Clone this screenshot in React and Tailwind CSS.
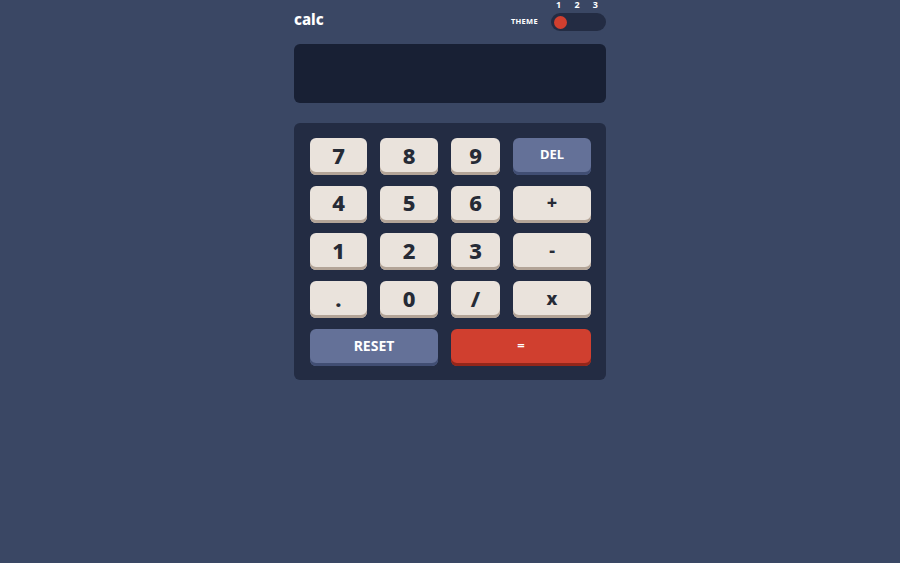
const keys = [
  { label: '7' }, { label: '8' }, { label: '9' }, { label: 'DEL', kind: 'blue' },
  { label: '4' }, { label: '5' }, { label: '6' }, { label: '+', kind: 'op' },
  { label: '1' }, { label: '2' }, { label: '3' }, { label: '-', kind: 'op' },
  { label: '.' }, { label: '0' }, { label: '/' }, { label: 'x', kind: 'op' },
];

function Key({ label, kind }) {
  if (kind === 'blue') {
    return (
      <button className="h-[37px] pb-[3px] rounded-[6px] bg-[#647198] shadow-[inset_0_-3px_0_#414e73] text-white text-[13px] font-bold">
        {label}
      </button>
    );
  }
  return (
    <button
      className={
        'h-[37px] pb-[3px] rounded-[6px] bg-[#eae3dc] shadow-[inset_0_-3px_0_#b3a497] text-[#262b36] font-extrabold ' +
        (kind === 'op' ? 'text-[18px]' : 'text-[22px]')
      }
    >
      {label}
    </button>
  );
}

export default function App() {
  return (
    <div className="min-h-screen bg-[#3a4764] font-['Noto_Sans',sans-serif]">
      <div className="w-[312px] mx-auto">
        <div className="flex justify-between items-end">
          <h1 className="text-white font-extrabold text-[15px] leading-none mb-[4px]">calc</h1>
          <div className="flex items-end gap-[13px]">
            <span className="text-white text-[7.5px] font-bold tracking-[0.3px] mb-[4px]">THEME</span>
            <div className="w-[55px]">
              <div className="flex justify-between pl-[5px] pr-[8px] h-[13px] text-white text-[9px] font-bold leading-[10px]">
                <span>1</span>
                <span>2</span>
                <span>3</span>
              </div>
              <div className="h-[18px] rounded-full bg-[#232c43] flex items-center pl-[3px]">
                <div className="w-[13px] h-[13px] rounded-full bg-[#d03f2f]" />
              </div>
            </div>
          </div>
        </div>

        <div className="mt-[13px] h-[59px] rounded-[6px] bg-[#182034]" />

        <div className="mt-[20px] rounded-[6px] bg-[#232c43] pt-[15px] pl-[16px] pr-[15px] pb-[14px]">
          <div className="grid grid-cols-[57px_58px_49px_78px] gap-x-[13px] gap-y-[10.7px]">
            {keys.map((k) => (
              <Key key={k.label} {...k} />
            ))}
            <button className="col-span-2 h-[37px] pb-[3px] rounded-[6px] bg-[#647198] shadow-[inset_0_-3px_0_#414e73] text-white text-[14px] font-bold">
              RESET
            </button>
            <button className="col-span-2 h-[37px] pb-[3px] rounded-[6px] bg-[#d03f2f] shadow-[inset_0_-3px_0_#93261a] text-white text-[13px] font-bold">
              =
            </button>
          </div>
        </div>
      </div>
    </div>
  );
}
